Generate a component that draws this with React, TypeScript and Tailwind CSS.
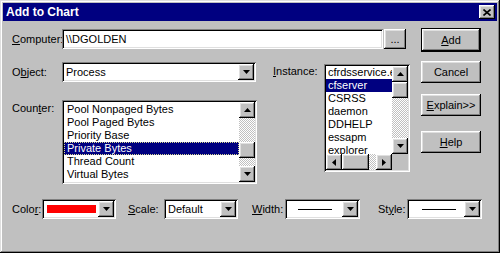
const raised =
  'shadow-[inset_-1px_-1px_0_#000,inset_1px_1px_0_#fff,inset_-2px_-2px_0_#808080,inset_2px_2px_0_#dfdfdf]'
const sunken =
  'shadow-[inset_1px_1px_0_#808080,inset_-1px_-1px_0_#fff,inset_2px_2px_0_#000,inset_-2px_-2px_0_#dfdfdf]'
const dither =
  'bg-[image:repeating-conic-gradient(#c0c0c0_0%_25%,#ffffff_0%_50%)] bg-[length:2px_2px]'

type Dir = 'up' | 'down' | 'left' | 'right'

const triPoints: Record<Dir, string> = {
  up: '0,4 7,4 3.5,0',
  down: '0,0 7,0 3.5,4',
  left: '4,0 4,7 0,3.5',
  right: '0,0 0,7 4,3.5',
}

function Tri({ dir }: { dir: Dir }) {
  const flat = dir === 'up' || dir === 'down'
  return (
    <svg width={flat ? 7 : 4} height={flat ? 4 : 7} viewBox={flat ? '0 0 7 4' : '0 0 4 7'}>
      <polygon points={triPoints[dir]} fill="#000" />
    </svg>
  )
}

function ArrowBtn({ dir }: { dir: Dir }) {
  return (
    <div className={`flex h-[16px] w-[16px] shrink-0 items-center justify-center bg-[#c0c0c0] ${raised}`}>
      <Tri dir={dir} />
    </div>
  )
}

function Combo({ width, children }: { width: string; children?: React.ReactNode }) {
  return (
    <div className={`flex h-[20px] ${width} items-center bg-white p-[2px] ${sunken}`}>
      <div className="flex h-full flex-1 items-center overflow-hidden">{children}</div>
      <ArrowBtn dir="down" />
    </div>
  )
}

function Button({ children, def, mt }: { children: React.ReactNode; def?: boolean; mt: string }) {
  if (def) {
    return (
      <div className={`${mt} h-[24px] w-[60px] border border-black`}>
        <div className={`flex h-full w-full items-center justify-center bg-[#c0c0c0] ${raised}`}>{children}</div>
      </div>
    )
  }
  return (
    <div className={`${mt} flex h-[22px] w-[60px] items-center justify-center bg-[#c0c0c0] ${raised}`}>
      {children}
    </div>
  )
}

const U = ({ children }: { children: React.ReactNode }) => (
  <span className="underline underline-offset-[1px]">{children}</span>
)

const counters = ['Pool Nonpaged Bytes', 'Pool Paged Bytes', 'Priority Base', 'Private Bytes', 'Thread Count', 'Virtual Bytes']
const instances = ['cfrdsservice.exe', 'cfserver', 'CSRSS', 'daemon', 'DDHELP', 'essapm', 'explorer']

export default function App() {
  return (
    <div
      className={`h-[253px] w-[500px] bg-[#c0c0c0] p-[3px] font-['Liberation_Sans',Arial,sans-serif] text-[11px] leading-[13px] text-black shadow-[inset_-1px_-1px_0_#000,inset_1px_1px_0_#dfdfdf,inset_-2px_-2px_0_#808080,inset_2px_2px_0_#fff]`}
    >
      {/* title bar */}
      <div className="flex h-[18px] items-center justify-between bg-[#000080] pl-[3px] pr-[2px]">
        <span className="text-[12px] font-bold text-white">Add to Chart</span>
        <div className={`flex h-[14px] w-[16px] items-center justify-center bg-[#c0c0c0] ${raised}`}>
          <svg width="8" height="7" viewBox="0 0 8 7">
            <path d="M0.5 0.5 L7.5 6.5 M7.5 0.5 L0.5 6.5" stroke="#000" strokeWidth="1.6" />
          </svg>
        </div>
      </div>

      <div className="flex">
        {/* left side */}
        <div className="w-[418px] pl-[9px]">
          <div className="mt-[8px] flex h-[20px] items-center">
            <span className="w-[50px]">
              <U>C</U>omputer:
            </span>
            <div className={`flex h-[20px] w-[321px] items-center bg-white pl-[4px] ${sunken}`}>{'\\\\DGOLDEN'}</div>
            <div className={`ml-[1px] flex h-[20px] w-[22px] items-start justify-center bg-[#c0c0c0] pt-[4px] ${raised}`}>
              ...
            </div>
          </div>

          <div className="flex">
            <div>
              <div className="mt-[13px] flex items-center">
                <span className="w-[50px]">
                  O<U>b</U>ject:
                </span>
                <Combo width="w-[194px]">
                  <span className="pl-[2px]">Process</span>
                </Combo>
              </div>
              <div className="mt-[18px] flex items-start">
                <span className="w-[50px] pt-[2px]">
                  Coun<U>t</U>er:
                </span>
                <div className={`flex h-[84px] w-[195px] bg-white p-[2px] ${sunken}`}>
                  <div className="flex-1 overflow-hidden pt-[1px]">
                    {counters.map((c) => (
                      <div
                        key={c}
                        className={
                          c === 'Private Bytes'
                            ? 'h-[13px] whitespace-nowrap bg-[#000080] pl-[3px] text-white outline-1 -outline-offset-1 outline-dotted outline-[#d8d890]'
                            : 'h-[13px] whitespace-nowrap pl-[3px]'
                        }
                      >
                        {c}
                      </div>
                    ))}
                  </div>
                  <div className="flex w-[16px] flex-col">
                    <ArrowBtn dir="up" />
                    <div className={`h-[24px] ${dither}`} />
                    <div className={`h-[16px] bg-[#c0c0c0] ${raised}`} />
                    <div className={`h-[8px] ${dither}`} />
                    <ArrowBtn dir="down" />
                  </div>
                </div>
              </div>
            </div>

            <div className="ml-[16px] mt-[15px] flex items-start">
              <span className="w-[51px] pt-[1px]">
                <U>I</U>nstance:
              </span>
              <div className={`flex h-[108px] w-[86px] flex-col bg-white p-[2px] ${sunken}`}>
                <div className="flex h-[88px]">
                  <div className="w-[66px] overflow-hidden">
                    {instances.map((i) => (
                      <div
                        key={i}
                        className={
                          i === 'cfserver'
                            ? 'h-[13px] whitespace-nowrap bg-[#000080] pl-[2px] text-white'
                            : 'h-[13px] whitespace-nowrap pl-[2px]'
                        }
                      >
                        {i}
                      </div>
                    ))}
                  </div>
                  <div className="flex w-[16px] flex-col">
                    <ArrowBtn dir="up" />
                    <div className={`h-[16px] bg-[#c0c0c0] ${raised}`} />
                    <div className={`h-[40px] ${dither}`} />
                    <ArrowBtn dir="down" />
                  </div>
                </div>
                <div className="flex h-[16px]">
                  <ArrowBtn dir="left" />
                  <div className={`w-[27px] bg-[#c0c0c0] ${raised}`} />
                  <div className={`w-[7px] ${dither}`} />
                  <ArrowBtn dir="right" />
                  <div className="w-[16px] bg-[#c0c0c0]" />
                </div>
              </div>
            </div>
          </div>
        </div>

        {/* buttons */}
        <div className="flex flex-col">
          <Button def mt="mt-[7px]">
            <span>
              <U>A</U>dd
            </span>
          </Button>
          <Button mt="mt-[9px]">Cancel</Button>
          <Button mt="mt-[11px]">
            <span>
              <U>E</U>xplain&gt;&gt;
            </span>
          </Button>
          <Button mt="mt-[15px]">
            <span>
              <U>H</U>elp
            </span>
          </Button>
        </div>
      </div>

      {/* bottom row */}
      <div className="mt-[15px] flex h-[20px] items-center pl-[9px]">
        <span className="w-[30px]">
          Colo<U>r</U>:
        </span>
        <Combo width="w-[74px]">
          <div className="ml-[3px] h-[8px] w-[49px] bg-[#ff0000]" />
        </Combo>
        <span className="ml-[12px] w-[36px]">
          <U>S</U>cale:
        </span>
        <Combo width="w-[74px]">
          <span className="pl-[2px]">Default</span>
        </Combo>
        <span className="ml-[14px] w-[33px]">
          <U>W</U>idth:
        </span>
        <Combo width="w-[75px]">
          <div className="ml-[11px] h-px w-[34px] bg-black" />
        </Combo>
        <span className="ml-[18px] w-[29px]">
          St<U>y</U>le:
        </span>
        <Combo width="w-[75px]">
          <div className="ml-[13px] h-px w-[34px] bg-black" />
        </Combo>
      </div>
    </div>
  )
}
